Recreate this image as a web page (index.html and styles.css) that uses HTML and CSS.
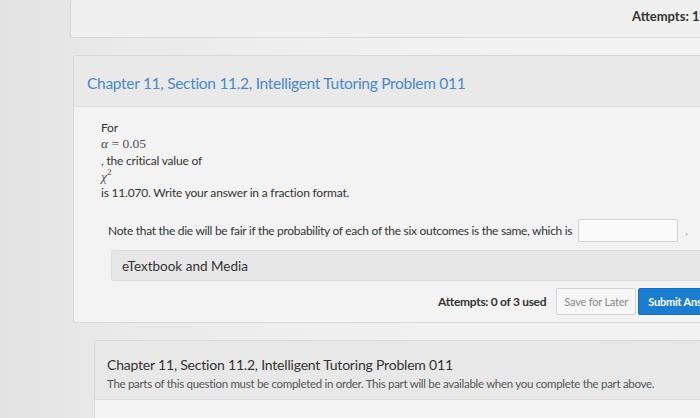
FILE: index.html
```html
<!DOCTYPE html>
<html>
<head>
<meta charset="utf-8">
<link rel="stylesheet" href="styles.css">
</head>
<body>
<div class="page">
  <div class="card card-top">
    <span class="top-attempts">Attempts: 1 of 3 used</span>
  </div>

  <div class="card card-q">
    <div class="q-head">
      <h2 class="q-title">Chapter 11, Section 11.2, Intelligent Tutoring Problem 011</h2>
    </div>
    <div class="q-body">
      <div class="prompt">
        <div class="line">For</div>
        <div class="line math"><i>α</i> = 0.05</div>
        <div class="line">, the critical value of</div>
        <div class="line math"><i>χ</i><sup>2</sup></div>
        <div class="line">is 11.070. Write your answer in a fraction format.</div>
      </div>
      <div class="note-row">
        <span class="note">Note that the die will be fair if the probability of each of the six outcomes is the same, which is</span>
        <span class="answer"></span>
        <span class="dot">.</span>
      </div>
      <div class="media">eTextbook and Media</div>
      <div class="actions">
        <span class="used">Attempts: 0 of 3 used</span>
        <span class="btn btn-save">Save for Later</span>
        <span class="btn btn-submit">Submit Answer</span>
      </div>
    </div>
  </div>

  <div class="card card-next">
    <div class="next-head">
      <h3 class="next-title">Chapter 11, Section 11.2, Intelligent Tutoring Problem 011</h3>
      <p class="next-sub">The parts of this question must be completed in order. This part will be available when you complete the part above.</p>
    </div>
    <div class="next-body"></div>
  </div>
</div>
</body>
</html>
```

FILE: styles.css
```css
html, body {
  margin: 0;
  padding: 0;
}
body {
  width: 700px;
  height: 418px;
  overflow: hidden;
  font-family: Lato, "Open Sans", "Liberation Sans", sans-serif;
  color: #333;
  background: linear-gradient(90deg, #e3e3e3 0%, #ebebeb 20%, #f1f1f1 60%, #f2f2f2 100%);
}
.page {
  display: flex;
  flex-direction: column;
  width: 800px;
}
.card {
  box-sizing: border-box;
  border: 1px solid #d9d9d9;
  border-right: none;
  border-radius: 3px 0 0 3px;
}
.card-top {
  margin-left: 70px;
  height: 38px;
  border-top: none;
  background: #f0f0f0;
  display: flex;
  align-items: center;
  padding-left: 561px;
  padding-bottom: 6px;
}
.top-attempts {
  font-size: 13px;
  font-weight: 700;
  color: #333;
  white-space: nowrap;
}
.card-q {
  margin-top: 17px;
  margin-left: 73px;
  background: #f3f3f3;
  height: 268px;
}
.q-head {
  height: 51px;
  box-sizing: border-box;
  background: #e9e9e9;
  border-bottom: 1px solid #dedede;
  display: flex;
  align-items: center;
  padding-left: 13px;
  padding-top: 3px;
}
.q-title {
  margin: 0;
  font-size: 15.5px;
  font-weight: 400;
  color: #4a88c9;
  letter-spacing: -0.3px;
  white-space: nowrap;
}
.q-body {
  padding: 13px 0 0 27px;
}
.prompt {
  font-size: 12px;
  line-height: 16.3px;
  letter-spacing: -0.2px;
  color: #333;
}
.math {
  font-family: "Liberation Serif", "DejaVu Serif", serif;
  font-size: 13.5px;
  letter-spacing: 0;
  color: #4d4d55;
}
.math i {
  font-style: italic;
}
.math sup {
  font-size: 9px;
  vertical-align: 6px;
  line-height: 0;
}
.note-row {
  display: flex;
  align-items: center;
  margin-top: 18px;
  margin-left: 7px;
  font-size: 12px;
  letter-spacing: -0.3px;
  white-space: nowrap;
}
.answer {
  display: inline-block;
  width: 100px;
  height: 23px;
  box-sizing: border-box;
  border: 1px solid #d4d4d4;
  background: #fafafa;
  margin-left: 6px;
}
.dot {
  margin-left: 7px;
  color: #999;
}
.media {
  margin-top: 8px;
  margin-left: 10px;
  height: 31px;
  box-sizing: border-box;
  background: #e7e7e7;
  border: 1px solid #dcdcdc;
  border-radius: 3px;
  display: flex;
  align-items: center;
  padding-left: 10px;
  font-size: 13.5px;
  color: #333;
}
.actions {
  display: flex;
  align-items: center;
  margin-top: 7px;
  padding-left: 337px;
  white-space: nowrap;
}
.used {
  font-size: 12px;
  font-weight: 700;
  letter-spacing: -0.3px;
  color: #333;
  margin-right: 10px;
}
.btn {
  box-sizing: border-box;
  height: 27px;
  display: inline-flex;
  align-items: center;
  border-radius: 2px;
  font-size: 11px;
}
.btn-save {
  width: 80px;
  justify-content: center;
  border: 1px solid #d3d3d3;
  background: #f7f7f7;
  color: #888;
  margin-right: 2px;
  letter-spacing: -0.2px;
}
.btn-submit {
  padding: 0 9px;
  background: #1a7dd0;
  color: #fff;
  font-weight: 700;
  letter-spacing: -0.2px;
  border: 1px solid #166fba;
}
.card-next {
  margin-top: 17px;
  margin-left: 94px;
  background: #f3f3f3;
  height: 100px;
}
.next-head {
  height: 59px;
  box-sizing: border-box;
  background: #e8e8e8;
  border-bottom: 1px solid #dcdcdc;
  padding: 15px 0 0 12px;
  white-space: nowrap;
}
.next-title {
  margin: 0;
  font-size: 14px;
  font-weight: 400;
  color: #333;
  letter-spacing: -0.2px;
  line-height: 17px;
}
.next-sub {
  margin: 4px 0 0;
  font-size: 11.5px;
  color: #555;
  letter-spacing: -0.3px;
  line-height: 14px;
}
.next-body {
  height: 40px;
}
```
